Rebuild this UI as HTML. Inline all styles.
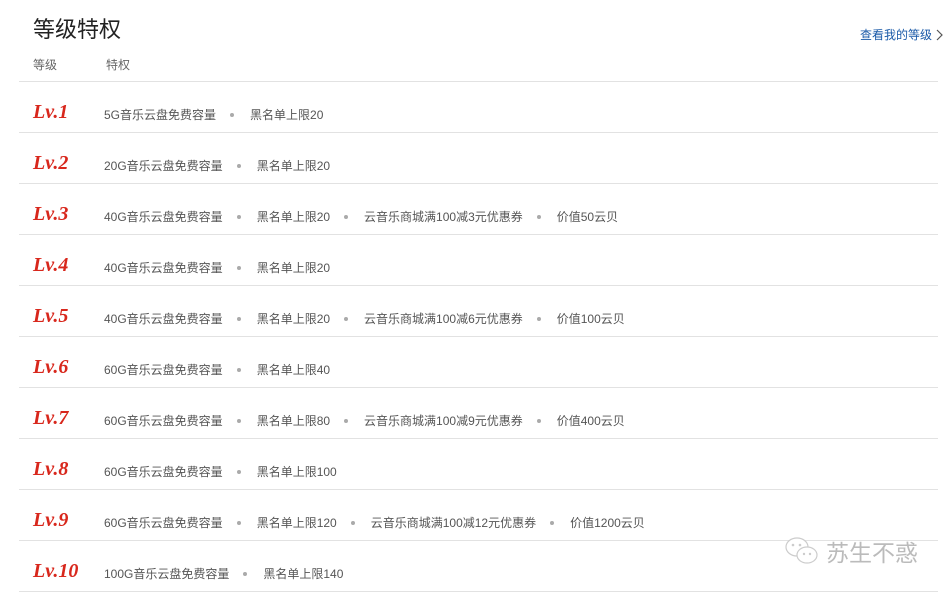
<!DOCTYPE html>
<html><head><meta charset="utf-8"><style>
*{margin:0;padding:0;box-sizing:border-box}
body{width:948px;height:594px;background:#fff;position:relative;overflow:hidden;font-family:"Liberation Sans","Noto Sans CJK SC",sans-serif;}
.t{position:absolute;left:33px;top:12px;font-size:22px;color:#222;}
.h{position:absolute;top:56px;font-size:12px;color:#666;}
.more{position:absolute;left:860px;top:26px;font-size:12px;color:#1a5aa8;}
.more svg{position:absolute;left:76px;top:3px}
.line{position:absolute;left:19px;width:919px;height:1px;background:#e2e2e2}
.row{position:absolute;left:0;width:948px;height:51px}
.lv{position:absolute;left:33px;top:21px;font-family:"Liberation Serif",serif;font-style:italic;font-weight:bold;font-size:20px;color:#d8271c;line-height:20px}
.p{position:absolute;left:104px;top:27px;font-size:12px;color:#555;line-height:14px;white-space:nowrap}
.p i{display:inline-block;width:4px;height:4px;border-radius:50%;background:#aaa;margin:0 16px 0 14px;vertical-align:middle;position:relative;top:-1px}
.wm{position:absolute;left:826px;top:534px;color:#bbb;font-size:23px}
</style></head><body>
<div class="t">等级特权</div>
<div class="h" style="left:33px">等级</div>
<div class="h" style="left:106px">特权</div>
<div class="more">查看我的等级<svg width="8" height="12" viewBox="0 0 8 12"><path d="M1 1l5 5-5 5" fill="none" stroke="#555" stroke-width="1.2"/></svg></div>
<div class="line" style="top:81px"></div>

<div class="row" style="top:81px"><div class="lv">Lv.1</div><div class="p">5G音乐云盘免费容量<i></i>黑名单上限20</div></div>
<div class="line" style="top:132px"></div>
<div class="row" style="top:132px"><div class="lv">Lv.2</div><div class="p">20G音乐云盘免费容量<i></i>黑名单上限20</div></div>
<div class="line" style="top:183px"></div>
<div class="row" style="top:183px"><div class="lv">Lv.3</div><div class="p">40G音乐云盘免费容量<i></i>黑名单上限20<i></i>云音乐商城满100减3元优惠券<i></i>价值50云贝</div></div>
<div class="line" style="top:234px"></div>
<div class="row" style="top:234px"><div class="lv">Lv.4</div><div class="p">40G音乐云盘免费容量<i></i>黑名单上限20</div></div>
<div class="line" style="top:285px"></div>
<div class="row" style="top:285px"><div class="lv">Lv.5</div><div class="p">40G音乐云盘免费容量<i></i>黑名单上限20<i></i>云音乐商城满100减6元优惠券<i></i>价值100云贝</div></div>
<div class="line" style="top:336px"></div>
<div class="row" style="top:336px"><div class="lv">Lv.6</div><div class="p">60G音乐云盘免费容量<i></i>黑名单上限40</div></div>
<div class="line" style="top:387px"></div>
<div class="row" style="top:387px"><div class="lv">Lv.7</div><div class="p">60G音乐云盘免费容量<i></i>黑名单上限80<i></i>云音乐商城满100减9元优惠券<i></i>价值400云贝</div></div>
<div class="line" style="top:438px"></div>
<div class="row" style="top:438px"><div class="lv">Lv.8</div><div class="p">60G音乐云盘免费容量<i></i>黑名单上限100</div></div>
<div class="line" style="top:489px"></div>
<div class="row" style="top:489px"><div class="lv">Lv.9</div><div class="p">60G音乐云盘免费容量<i></i>黑名单上限120<i></i>云音乐商城满100减12元优惠券<i></i>价值1200云贝</div></div>
<div class="line" style="top:540px"></div>
<div class="row" style="top:540px"><div class="lv">Lv.10</div><div class="p">100G音乐云盘免费容量<i></i>黑名单上限140</div></div>
<div class="line" style="top:591px"></div>

<svg style="position:absolute;left:783px;top:535px" width="42" height="32" viewBox="0 0 42 32"><ellipse cx="14" cy="12" rx="11" ry="9" fill="#fff" stroke="#ccc" stroke-width="1.2"/><circle cx="10" cy="10" r="1.3" fill="#ccc"/><circle cx="17" cy="10" r="1.3" fill="#ccc"/><ellipse cx="24" cy="20" rx="10" ry="8" fill="#fff" stroke="#ccc" stroke-width="1.2"/><circle cx="21" cy="19" r="1.2" fill="#ccc"/><circle cx="27" cy="19" r="1.2" fill="#ccc"/></svg>
<div class="wm">苏生不惑</div>
</body></html>
